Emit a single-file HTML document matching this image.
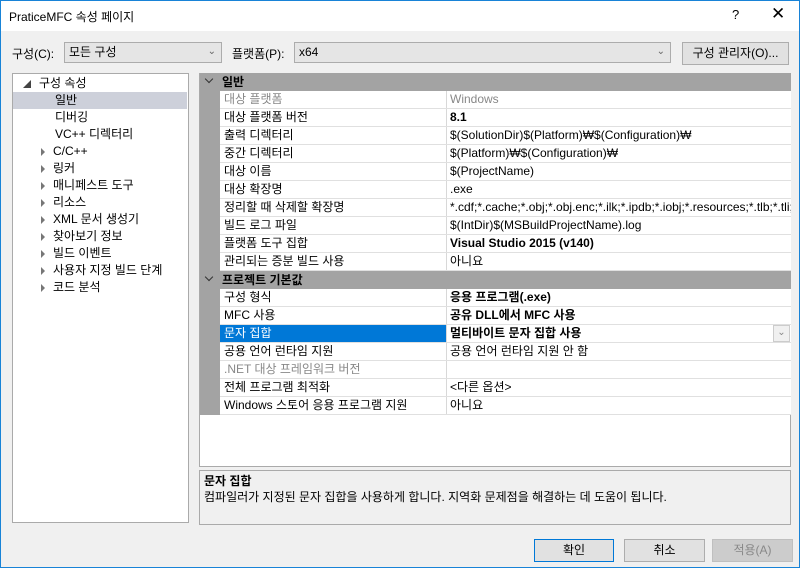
<!DOCTYPE html>
<html><head><meta charset="utf-8"><style>
*{margin:0;padding:0;box-sizing:border-box}
body{width:800px;height:568px;background:#f0f0f0;font-family:"Liberation Sans","Noto Sans CJK KR",sans-serif;font-size:12px;color:#000;position:relative;overflow:hidden;border:1px solid #1883d7}
.a{position:absolute;white-space:nowrap}
.combo{position:absolute;background:#e5e5e5;border:1px solid #acacac;height:21px;padding:2px 4px;line-height:15px}
.btn{position:absolute;background:#e1e1e1;border:1px solid #adadad;text-align:center;line-height:20px;height:23px}
.tree div{height:17px;line-height:17px;position:absolute;left:0;white-space:nowrap}
.tri{display:inline-block;width:0;height:0;border-top:4px solid transparent;border-bottom:4px solid transparent;border-left:4px solid #777;margin-right:8px;vertical-align:middle}
.row{position:absolute;left:20px;width:571px;height:18px;line-height:17px;border-bottom:1px solid #e0e0e0;background:#fff}
.row .n{position:absolute;left:0;width:227px;height:17px;padding-left:4px;border-right:1px solid #d8d8d8}
.row .v{position:absolute;left:227px;padding-left:3px;width:344px;overflow:hidden}
.hdr{position:absolute;left:0;width:591px;height:18px;background:#a3a3a3;line-height:18px;font-weight:bold}
.chev{position:absolute;left:6px;top:3px;width:6px;height:6px;border-right:1.5px solid #333;border-bottom:1.5px solid #333;transform:rotate(45deg)}
.g{color:#888}.b{font-weight:bold}
</style></head><body>
<div class="a" style="left:0;top:0;width:798px;height:30px;background:#fff"></div>
<div class="a" style="left:8px;top:7px;font-size:12px">PraticeMFC 속성 페이지</div>
<div class="a" style="left:731px;top:6px;font-size:13px">?</div>
<div class="a" style="left:770px;top:3px;font-size:17px;font-weight:300">✕</div>

<div class="a" style="left:11px;top:44px">구성(C):</div>
<div class="combo" style="left:63px;top:41px;width:158px">모든 구성<span style="position:absolute;right:5px;top:1px;color:#666;font-size:10px">&#8964;</span></div>
<div class="a" style="left:231px;top:44px">플랫폼(P):</div>
<div class="combo" style="left:293px;top:41px;width:377px">x64<span style="position:absolute;right:5px;top:1px;color:#666;font-size:10px">&#8964;</span></div>
<div class="btn" style="left:681px;top:41px;width:107px">구성 관리자(O)...</div>

<div class="a tree" style="left:11px;top:72px;width:177px;height:450px;background:#fff;border:1px solid #aaa">
<div style="top:1px;left:10px"><span style="font-size:8px;color:#444;margin-right:8px">◢</span>구성 속성</div>
<div style="top:18px;left:0;width:174px;background:#cdd0da;padding-left:42px">일반</div>
<div style="top:35px;left:42px">디버깅</div>
<div style="top:52px;left:42px">VC++ 디렉터리</div>
<div style="top:69px;left:28px"><span class="tri"></span>C/C++</div>
<div style="top:86px;left:28px"><span class="tri"></span>링커</div>
<div style="top:103px;left:28px"><span class="tri"></span>매니페스트 도구</div>
<div style="top:120px;left:28px"><span class="tri"></span>리소스</div>
<div style="top:137px;left:28px"><span class="tri"></span>XML 문서 생성기</div>
<div style="top:154px;left:28px"><span class="tri"></span>찾아보기 정보</div>
<div style="top:171px;left:28px"><span class="tri"></span>빌드 이벤트</div>
<div style="top:188px;left:28px"><span class="tri"></span>사용자 지정 빌드 단계</div>
<div style="top:205px;left:28px"><span class="tri"></span>코드 분석</div>
</div>

<div class="a" style="left:198px;top:72px;width:592px;height:394px;background:#fff;border:1px solid #aaa;border-top:none">
<div class="a" style="left:0;top:0;width:20px;height:342px;background:#a3a3a3"></div>
<div class="hdr" style="top:0"><span class="chev"></span><span style="margin-left:22px">일반</span></div>
<div class="row" style="top:18px"><span class="n g">대상 플랫폼</span><span class="v g">Windows</span></div>
<div class="row" style="top:36px"><span class="n">대상 플랫폼 버전</span><span class="v b">8.1</span></div>
<div class="row" style="top:54px"><span class="n">출력 디렉터리</span><span class="v">$(SolutionDir)$(Platform)₩$(Configuration)₩</span></div>
<div class="row" style="top:72px"><span class="n">중간 디렉터리</span><span class="v">$(Platform)₩$(Configuration)₩</span></div>
<div class="row" style="top:90px"><span class="n">대상 이름</span><span class="v">$(ProjectName)</span></div>
<div class="row" style="top:108px"><span class="n">대상 확장명</span><span class="v">.exe</span></div>
<div class="row" style="top:126px"><span class="n">정리할 때 삭제할 확장명</span><span class="v">*.cdf;*.cache;*.obj;*.obj.enc;*.ilk;*.ipdb;*.iobj;*.resources;*.tlb;*.tli;*.tl</span></div>
<div class="row" style="top:144px"><span class="n">빌드 로그 파일</span><span class="v">$(IntDir)$(MSBuildProjectName).log</span></div>
<div class="row" style="top:162px"><span class="n">플랫폼 도구 집합</span><span class="v b">Visual Studio 2015 (v140)</span></div>
<div class="row" style="top:180px"><span class="n">관리되는 증분 빌드 사용</span><span class="v">아니요</span></div>
<div class="hdr" style="top:198px"><span class="chev"></span><span style="margin-left:22px">프로젝트 기본값</span></div>
<div class="row" style="top:216px"><span class="n">구성 형식</span><span class="v b">응용 프로그램(.exe)</span></div>
<div class="row" style="top:234px"><span class="n">MFC 사용</span><span class="v b">공유 DLL에서 MFC 사용</span></div>
<div class="row" style="top:252px"><span class="n" style="background:#0078d7;color:#fff">문자 집합</span><span class="v b">멀티바이트 문자 집합 사용</span><span style="position:absolute;right:1px;top:0;width:17px;height:17px;border:1px solid #ccc;background:#f0f0f0;color:#888;font-size:10px;text-align:center;line-height:13px">&#8964;</span></div>
<div class="row" style="top:270px"><span class="n">공용 언어 런타임 지원</span><span class="v">공용 언어 런타임 지원 안 함</span></div>
<div class="row" style="top:288px"><span class="n g">.NET 대상 프레임워크 버전</span><span class="v"></span></div>
<div class="row" style="top:306px"><span class="n">전체 프로그램 최적화</span><span class="v">&lt;다른 옵션&gt;</span></div>
<div class="row" style="top:324px"><span class="n">Windows 스토어 응용 프로그램 지원</span><span class="v">아니요</span></div>
</div>

<div class="a" style="left:198px;top:469px;width:592px;height:55px;border:1px solid #aaa;background:#f0f0f0">
<div class="a b" style="left:4px;top:1px">문자 집합</div>
<div class="a" style="left:4px;top:17px">컴파일러가 지정된 문자 집합을 사용하게 합니다. 지역화 문제점을 해결하는 데 도움이 됩니다.</div>
</div>

<div class="btn" style="left:533px;top:538px;width:80px;border:1px solid #0078d7">확인</div>
<div class="btn" style="left:623px;top:538px;width:81px">취소</div>
<div class="btn" style="left:711px;top:538px;width:81px;background:#ccc;border-color:#bfbfbf;color:#888">적용(A)</div>
</body></html>
